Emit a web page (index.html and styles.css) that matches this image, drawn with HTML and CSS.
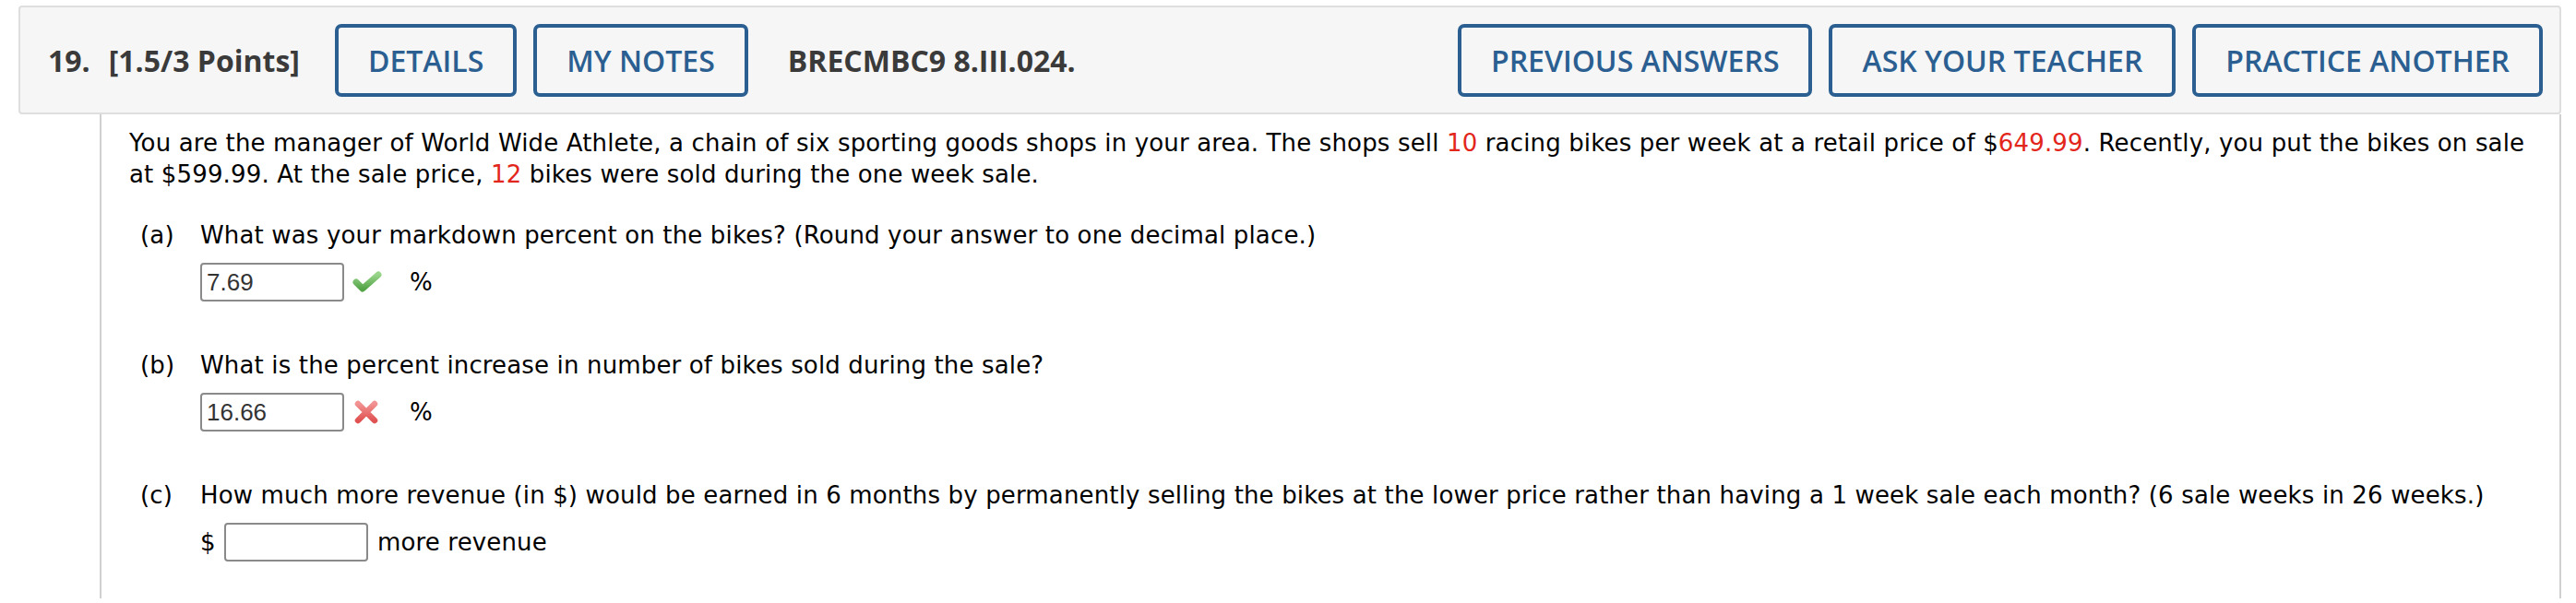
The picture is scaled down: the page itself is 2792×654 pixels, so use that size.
FILE: index.html
```html
<!DOCTYPE html>
<html lang="en">
<head>
<meta charset="utf-8">
<title>Question 19</title>
<link rel="stylesheet" href="styles.css">
</head>
<body>
<div class="question">
  <div class="q-header">
    <div class="q-title"><span class="q-num">19.</span><span>[1.5/3 Points]</span></div>
    <button class="btn">DETAILS</button>
    <button class="btn">MY NOTES</button>
    <div class="q-code">BRECMBC9 8.III.024.</div>
    <div class="spacer"></div>
    <button class="btn">PREVIOUS ANSWERS</button>
    <button class="btn">ASK YOUR TEACHER</button>
    <button class="btn">PRACTICE ANOTHER</button>
  </div>
  <div class="q-body">
    <p class="intro">You are the manager of World Wide Athlete, a chain of six sporting goods shops in your area. The shops sell <span class="red">10</span> racing bikes per week at a retail price of $<span class="red">649.99</span>. Recently, you put the bikes on sale at $599.99. At the sale price, <span class="red">12</span> bikes were sold during the one week sale.</p>

    <div class="part">
      <div class="part-q"><span class="part-label">(a)</span><span>What was your markdown percent on the bikes? (Round your answer to one decimal place.)</span></div>
      <div class="answer">
        <input class="ans-input" type="text" value="7.69">
        <svg class="mark" width="32" height="26" viewBox="0 0 32 26">
          <defs>
            <linearGradient id="gchk" x1="0" y1="0" x2="0" y2="1">
              <stop offset="0" stop-color="#98d48a"/>
              <stop offset="1" stop-color="#55a548"/>
            </linearGradient>
          </defs>
          <polyline points="4,13 11,20 28,5" fill="none" stroke="url(#gchk)" stroke-width="7" stroke-linecap="round" stroke-linejoin="round"/>
        </svg>
        <span class="unit">%</span>
      </div>
    </div>

    <div class="part">
      <div class="part-q"><span class="part-label">(b)</span><span>What is the percent increase in number of bikes sold during the sale?</span></div>
      <div class="answer">
        <input class="ans-input" type="text" value="16.66">
        <svg class="mark" width="32" height="28" viewBox="0 0 32 28">
          <defs>
            <linearGradient id="gx" x1="0" y1="0" x2="0" y2="1">
              <stop offset="0" stop-color="#f29292"/>
              <stop offset="1" stop-color="#e05252"/>
            </linearGradient>
          </defs>
          <path d="M6,5 L24,23 M24,5 L6,23" fill="none" stroke="url(#gx)" stroke-width="6.5" stroke-linecap="round"/>
        </svg>
        <span class="unit">%</span>
      </div>
    </div>

    <div class="part">
      <div class="part-q"><span class="part-label">(c)</span><span>How much more revenue (in $) would be earned in 6 months by permanently selling the bikes at the lower price rather than having a 1 week sale each month? (6 sale weeks in 26 weeks.)</span></div>
      <div class="answer answer-c">
        <span class="cur">$</span>
        <input class="ans-input" type="text" value="">
        <span class="unit-c">more revenue</span>
      </div>
    </div>
  </div>
</div>
</body>
</html>
```
FILE: styles.css
```css
html, body {
  margin: 0;
  padding: 0;
  background: #ffffff;
}

body {
  font-family: "DejaVu Sans", Verdana, sans-serif;
  color: #000;
}

.question {
  margin: 6px 16px 0 20px;
}

.q-header {
  display: flex;
  align-items: center;
  height: 118px;
  box-sizing: border-box;
  padding: 0 18px 0 30px;
  background: #f6f6f6;
  border: 2px solid #dedede;
  border-radius: 4px;
  font-family: "Open Sans", sans-serif;
}

.q-title {
  display: flex;
  font-size: 32px;
  font-weight: 700;
  color: #3a3a3a;
  margin-right: 38px;
  white-space: nowrap;
}

.q-num {
  margin-right: 20px;
}

.btn {
  display: flex;
  align-items: center;
  height: 79px;
  box-sizing: border-box;
  padding: 0 32px;
  margin-right: 18px;
  background: transparent;
  border: 4px solid #2b5f91;
  border-radius: 7px;
  color: #2b5f91;
  font-family: "Open Sans", sans-serif;
  font-size: 32px;
  font-weight: 600;
  white-space: nowrap;
}

.btn:last-child {
  margin-right: 0;
}

.q-code {
  margin-left: 25px;
  font-size: 32px;
  font-weight: 700;
  color: #3a3a3a;
  white-space: nowrap;
}

.spacer {
  flex: 1;
}

.q-body {
  margin-left: 88px;
  border-left: 2px solid #d0d0d0;
  border-right: 2px solid #d0d0d0;
  padding: 14px 20px 40px 30px;
  font-size: 26px;
  letter-spacing: 0.15px;
  line-height: 34px;
}

.intro {
  margin: 0;
}

.red {
  color: #e3261c;
}

.part {
  margin-top: 32px;
}

.part + .part {
  margin-top: 52px;
}

.part-q {
  display: flex;
  padding-left: 12px;
}

.part-label {
  width: 65px;
  flex: none;
}

.answer {
  display: flex;
  align-items: center;
  margin-top: 13px;
  padding-left: 77px;
  height: 42px;
}

.ans-input {
  width: 156px;
  height: 42px;
  box-sizing: border-box;
  margin: 0;
  padding: 0 5px;
  border: 2px solid #8a8a8a;
  border-radius: 4px;
  font-family: "Liberation Sans", Arial, sans-serif;
  font-size: 26px;
  letter-spacing: 0;
  color: #333;
  background: #fff;
}

.mark {
  margin-left: 9px;
  flex: none;
}

.unit {
  margin-left: 30px;
}

.answer-c {
  gap: 10px;
}

.cur {
  width: 16px;
}
```
